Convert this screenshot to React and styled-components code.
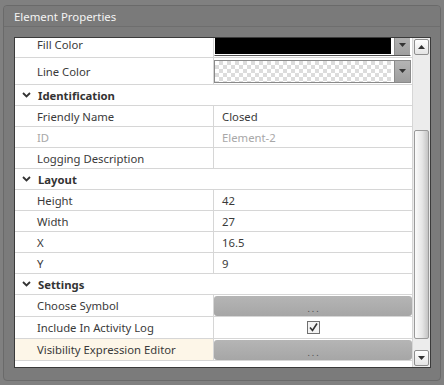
import React from "react";
import styled, { createGlobalStyle } from "styled-components";

const Global = createGlobalStyle`
  html, body { margin: 0; padding: 0; }
  body {
    width: 444px; height: 385px; overflow: hidden;
    background: #808080;
    font-family: "Noto Sans", "Open Sans", sans-serif;
  }
`;

const Frame = styled.div`
  box-sizing: border-box;
  margin: 5px 3px 0 3px;
  width: 438px;
  height: 376px;
  border: 1px solid #6a6a6a;
  border-radius: 4px;
  background: #7b7b7b;
  display: flex;
  flex-direction: column;
`;

const Header = styled.div`
  height: 21px;
  border-bottom: 1px solid #6e6e6e;
  display: flex;
  align-items: center;
  padding-left: 10px;
  color: #f4f4f4;
  font-size: 11.4px;
  background: #7a7a7a;
  border-radius: 3px 3px 0 0;
`;

const Body = styled.div`
  padding: 10px 9px 12px 10px;
  flex: 1;
  display: flex;
`;

const ListBox = styled.div`
  box-sizing: border-box;
  width: 418px;
  height: 331px;
  border: 1px solid #3a3a3a;
  background: #fff;
  display: flex;
  overflow: hidden;
`;

const Grid = styled.div`
  width: 398px;
  border-right: 1px solid #d6d6d6;
  overflow: hidden;
`;

const Scroll = styled.div`
  margin-top: -6px;
`;

const Row = styled.div`
  box-sizing: border-box;
  height: ${(p) => p.$h || 21}px;
  border-bottom: 1px solid #d6d6d6;
  display: flex;
  font-size: 11.3px;
  color: #3a3a3a;
`;

const Label = styled.div`
  box-sizing: border-box;
  width: 199px;
  padding-left: 22px;
  border-right: 1px solid #d6d6d6;
  display: flex;
  align-items: center;
  color: ${(p) => (p.$dim ? "#a8a8a8" : "#3a3a3a")};
  background: ${(p) => (p.$hl ? "#fdf6e8" : "transparent")};
`;

const Value = styled.div`
  flex: 1;
  display: flex;
  align-items: center;
  padding-left: ${(p) => (p.$pad ? 8 : 0)}px;
  justify-content: ${(p) => (p.$center ? "center" : "flex-start")};
  color: ${(p) => (p.$dim ? "#a8a8a8" : "#3a3a3a")};
`;

const Category = styled.div`
  box-sizing: border-box;
  height: 21px;
  border-bottom: 1px solid #d6d6d6;
  display: flex;
  align-items: center;
  font-size: 11.3px;
  font-weight: 700;
  color: #333;
  svg { margin-left: 7px; margin-right: 7px; }
`;

const Combo = styled.div`
  box-sizing: border-box;
  flex: 1;
  margin: 2px 1px 2px 0;
  height: 23px;
  border: 1px solid ${(p) => (p.$plain ? "#fff" : "#8a8a8a")};
  border-bottom-color: ${(p) => (p.$plain ? "#555" : "#8a8a8a")};
  display: flex;
  align-items: stretch;
  background: #fff;
`;

const Swatch = styled.div`
  flex: 1;
  margin-right: 3px;
  ${(p) =>
    p.$checker
      ? `background-color:#fff;
         background-image: linear-gradient(45deg,#dcdcdc 25%,transparent 25%,transparent 75%,#dcdcdc 75%),
           linear-gradient(45deg,#dcdcdc 25%,transparent 25%,transparent 75%,#dcdcdc 75%);
         background-size: 8px 8px;
         background-position: 0 0, 4px 4px;`
      : `background:#000; margin-bottom: 1px;`}
`;

const DropBtn = styled.div`
  width: 15px;
  border-left: 1px solid #8a8a8a;
  background: linear-gradient(#b4b4b4, #9e9e9e);
  display: flex;
  align-items: center;
  justify-content: center;
`;

const DotsBtn = styled.div`
  flex: 1;
  margin: 1px 0 1px 0;
  height: 20px;
  border-radius: 3px;
  background: linear-gradient(#b5b5b5, #a6a6a6);
  display: flex;
  align-items: flex-end;
  justify-content: center;
  color: #4a4a4a;
  font-size: 9px;
  letter-spacing: 2px;
  line-height: 15px;
  padding-left: 2px;
`;

const Check = styled.div`
  box-sizing: border-box;
  width: 13px;
  height: 13px;
  border: 1px solid #707070;
  background: #f3f3f3;
  display: flex;
  align-items: center;
  justify-content: center;
`;

const ScrollBar = styled.div`
  width: 17px;
  background: #ececec;
  display: flex;
  flex-direction: column;
  align-items: center;
  padding: 1px 0;
  box-sizing: border-box;
`;

const SBtn = styled.div`
  box-sizing: border-box;
  width: 15px;
  height: 16px;
  border: 1px solid #8e8e8e;
  border-radius: 2px;
  background: linear-gradient(#ffffff, #e4e4e4);
  display: flex;
  align-items: center;
  justify-content: center;
`;

const Track = styled.div`
  flex: 1;
  width: 15px;
  display: flex;
  flex-direction: column;
`;

const Thumb = styled.div`
  box-sizing: border-box;
  margin-top: 75px;
  height: 209px;
  width: 15px;
  border: 1px solid #9a9a9a;
  border-radius: 2px;
  background: linear-gradient(90deg, #fbfbfb, #e6e6e6 55%, #c4c4c4);
`;

const Tri = ({ up }) => (
  <svg width="7" height="4" viewBox="0 0 7 4">
    <path d={up ? "M0 4 L3.5 0 L7 4 Z" : "M0 0 L7 0 L3.5 4 Z"} fill="#333" />
  </svg>
);

const Chevron = () => (
  <svg width="9" height="6" viewBox="0 0 9 6">
    <path d="M1 1 L4.5 4.5 L8 1" stroke="#333" strokeWidth="1.8" fill="none" />
  </svg>
);

const Prop = ({ label, value, dim }) => (
  <Row>
    <Label $dim={dim}>{label}</Label>
    <Value $pad $dim={dim}>{value}</Value>
  </Row>
);

const Cat = ({ title }) => (
  <Category>
    <Chevron />
    {title}
  </Category>
);

export default function App() {
  return (
    <>
      <Global />
      <Frame>
        <Header>Element Properties</Header>
        <Body>
          <ListBox>
            <Grid>
              <Scroll>
                <Row $h={26}>
                  <Label>Fill Color</Label>
                  <Value>
                    <Combo $plain>
                      <Swatch />
                      <DropBtn><Tri /></DropBtn>
                    </Combo>
                  </Value>
                </Row>
                <Row $h={27}>
                  <Label>Line Color</Label>
                  <Value>
                    <Combo>
                      <Swatch $checker />
                      <DropBtn><Tri /></DropBtn>
                    </Combo>
                  </Value>
                </Row>
                <Cat title="Identification" />
                <Prop label="Friendly Name" value="Closed" />
                <Prop label="ID" value="Element-2" dim />
                <Prop label="Logging Description" value="" />
                <Cat title="Layout" />
                <Prop label="Height" value="42" />
                <Prop label="Width" value="27" />
                <Prop label="X" value="16.5" />
                <Prop label="Y" value="9" />
                <Cat title="Settings" />
                <Row $h={22}>
                  <Label>Choose Symbol</Label>
                  <Value><DotsBtn>...</DotsBtn></Value>
                </Row>
                <Row $h={22}>
                  <Label>Include In Activity Log</Label>
                  <Value $center>
                    <Check>
                      <svg width="9" height="9" viewBox="0 0 9 9">
                        <path d="M1 4.5 L3.5 7.5 L8 0.5" stroke="#333" strokeWidth="1.6" fill="none" />
                      </svg>
                    </Check>
                  </Value>
                </Row>
                <Row $h={22}>
                  <Label $hl>Visibility Expression Editor</Label>
                  <Value><DotsBtn>...</DotsBtn></Value>
                </Row>
              </Scroll>
            </Grid>
            <ScrollBar>
              <SBtn><Tri up /></SBtn>
              <Track><Thumb /></Track>
              <SBtn><Tri /></SBtn>
            </ScrollBar>
          </ListBox>
        </Body>
      </Frame>
    </>
  );
}
